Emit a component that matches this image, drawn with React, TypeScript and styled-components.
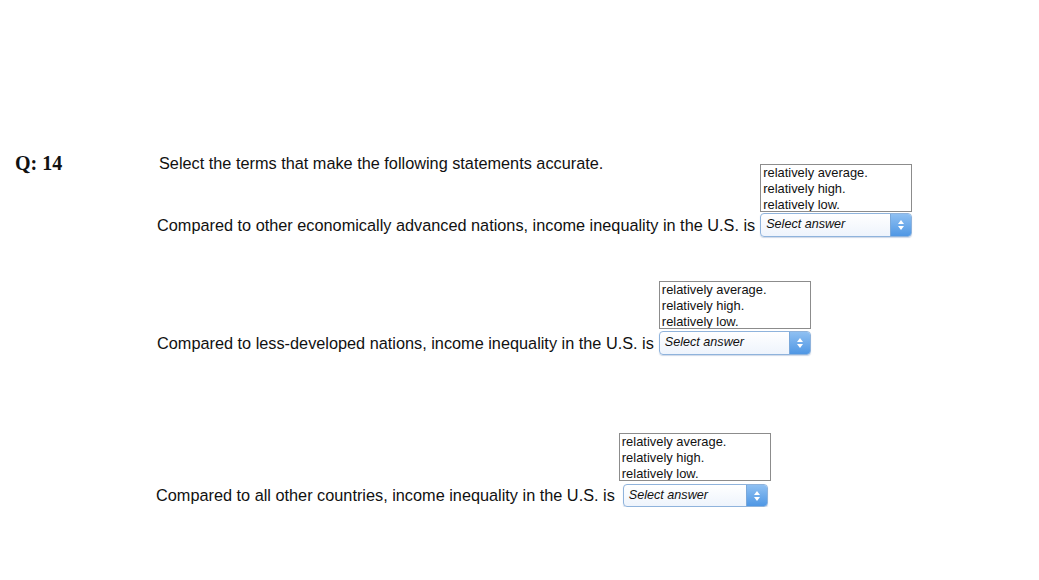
import React from "react";
import styled, { createGlobalStyle } from "styled-components";

const GlobalStyle = createGlobalStyle`
  html, body {
    margin: 0;
    background: #ffffff;
  }
`;

const Page = styled.div`
  display: flex;
  align-items: flex-start;
  padding: 152px 0 0 15px;
  font-family: "Liberation Sans", Arial, sans-serif;
  color: #111;
`;

const QLabel = styled.div`
  width: 142px;
  flex: none;
  font-family: "Liberation Serif", "Times New Roman", serif;
  font-weight: bold;
  font-size: 20px;
  line-height: 22px;
`;

const Body = styled.div`
  display: flex;
  flex-direction: column;
`;

const Prompt = styled.div`
  font-size: 16.3px;
  line-height: 22px;
  padding-left: 2px;
`;

const Row = styled.div<{ $top: number; $indent?: number }>`
  display: flex;
  align-items: flex-end;
  margin-top: ${(p) => p.$top}px;
  margin-left: ${(p) => p.$indent ?? 0}px;
`;

const Sentence = styled.span<{ $gap: number }>`
  font-size: 16.3px;
  line-height: 20px;
  padding: 0 ${(p) => p.$gap}px 2px 0;
`;

const Picker = styled.div`
  display: flex;
  flex-direction: column;
  width: 152px;
`;

const Options = styled.ul`
  list-style: none;
  box-sizing: border-box;
  height: 48px;
  overflow: hidden;
  margin: 0;
  padding: 0 0 0 2px;
  border: 1px solid #8c8c8c;
  font-size: 12.9px;
  line-height: 16px;
  color: #111;
`;

const SelectBox = styled.div<{ $inset: number; $spacing: number; $height: number }>`
  display: flex;
  align-items: stretch;
  height: ${(p) => p.$height}px;
  box-sizing: border-box;
  margin: ${(p) => p.$spacing}px ${(p) => (p.$inset ? 3 : 0)}px 0 ${(p) => p.$inset}px;
  border: 1px solid #8fb3dc;
  border-radius: 4px;
  background: linear-gradient(#ffffff, #eef4fc);
  box-shadow: 0 1px 1px rgba(60, 100, 160, 0.25);
  overflow: hidden;
`;

const SelectText = styled.span`
  flex: 1;
  font-style: italic;
  font-size: 12.6px;
  line-height: 20px;
  padding-left: 5px;
  color: #111;
`;

const Spinner = styled.span`
  width: 20px;
  display: flex;
  align-items: center;
  justify-content: center;
  background: linear-gradient(#8fc0f2, #4f97e4);
  border-left: 1px solid #7aa8da;
`;

const Arrows = () => (
  <svg width="8" height="12" viewBox="0 0 8 12">
    <path d="M4 1 L7 5 L1 5 Z" fill="#fff" />
    <path d="M4 11 L7 7 L1 7 Z" fill="#fff" />
  </svg>
);

const choices = ["relatively average.", "relatively high.", "relatively low."];

const statements = [
  {
    text: "Compared to other economically advanced nations, income inequality in the U.S. is",
    top: -10,
    indent: 0,
    gap: 5,
    inset: 0,
    spacing: 1,
    height: 24,
  },
  {
    text: "Compared to less-developed nations, income inequality in the U.S. is",
    top: 44,
    indent: 0,
    gap: 5,
    inset: 0,
    spacing: 2,
    height: 24,
  },
  {
    text: "Compared to all other countries, income inequality in the U.S. is",
    top: 78,
    indent: -1,
    gap: 4,
    inset: 4,
    spacing: 3,
    height: 23,
  },
];

export default function App() {
  return (
    <>
      <GlobalStyle />
      <Page>
        <QLabel>Q: 14</QLabel>
        <Body>
          <Prompt>Select the terms that make the following statements accurate.</Prompt>
          {statements.map((s, i) => (
            <Row key={i} $top={s.top} $indent={s.indent}>
              <Sentence $gap={s.gap}>{s.text}</Sentence>
              <Picker>
                <Options>
                  {choices.map((c) => (
                    <li key={c}>{c}</li>
                  ))}
                </Options>
                <SelectBox $inset={s.inset} $spacing={s.spacing} $height={s.height}>
                  <SelectText>Select answer</SelectText>
                  <Spinner>
                    <Arrows />
                  </Spinner>
                </SelectBox>
              </Picker>
            </Row>
          ))}
        </Body>
      </Page>
    </>
  );
}
